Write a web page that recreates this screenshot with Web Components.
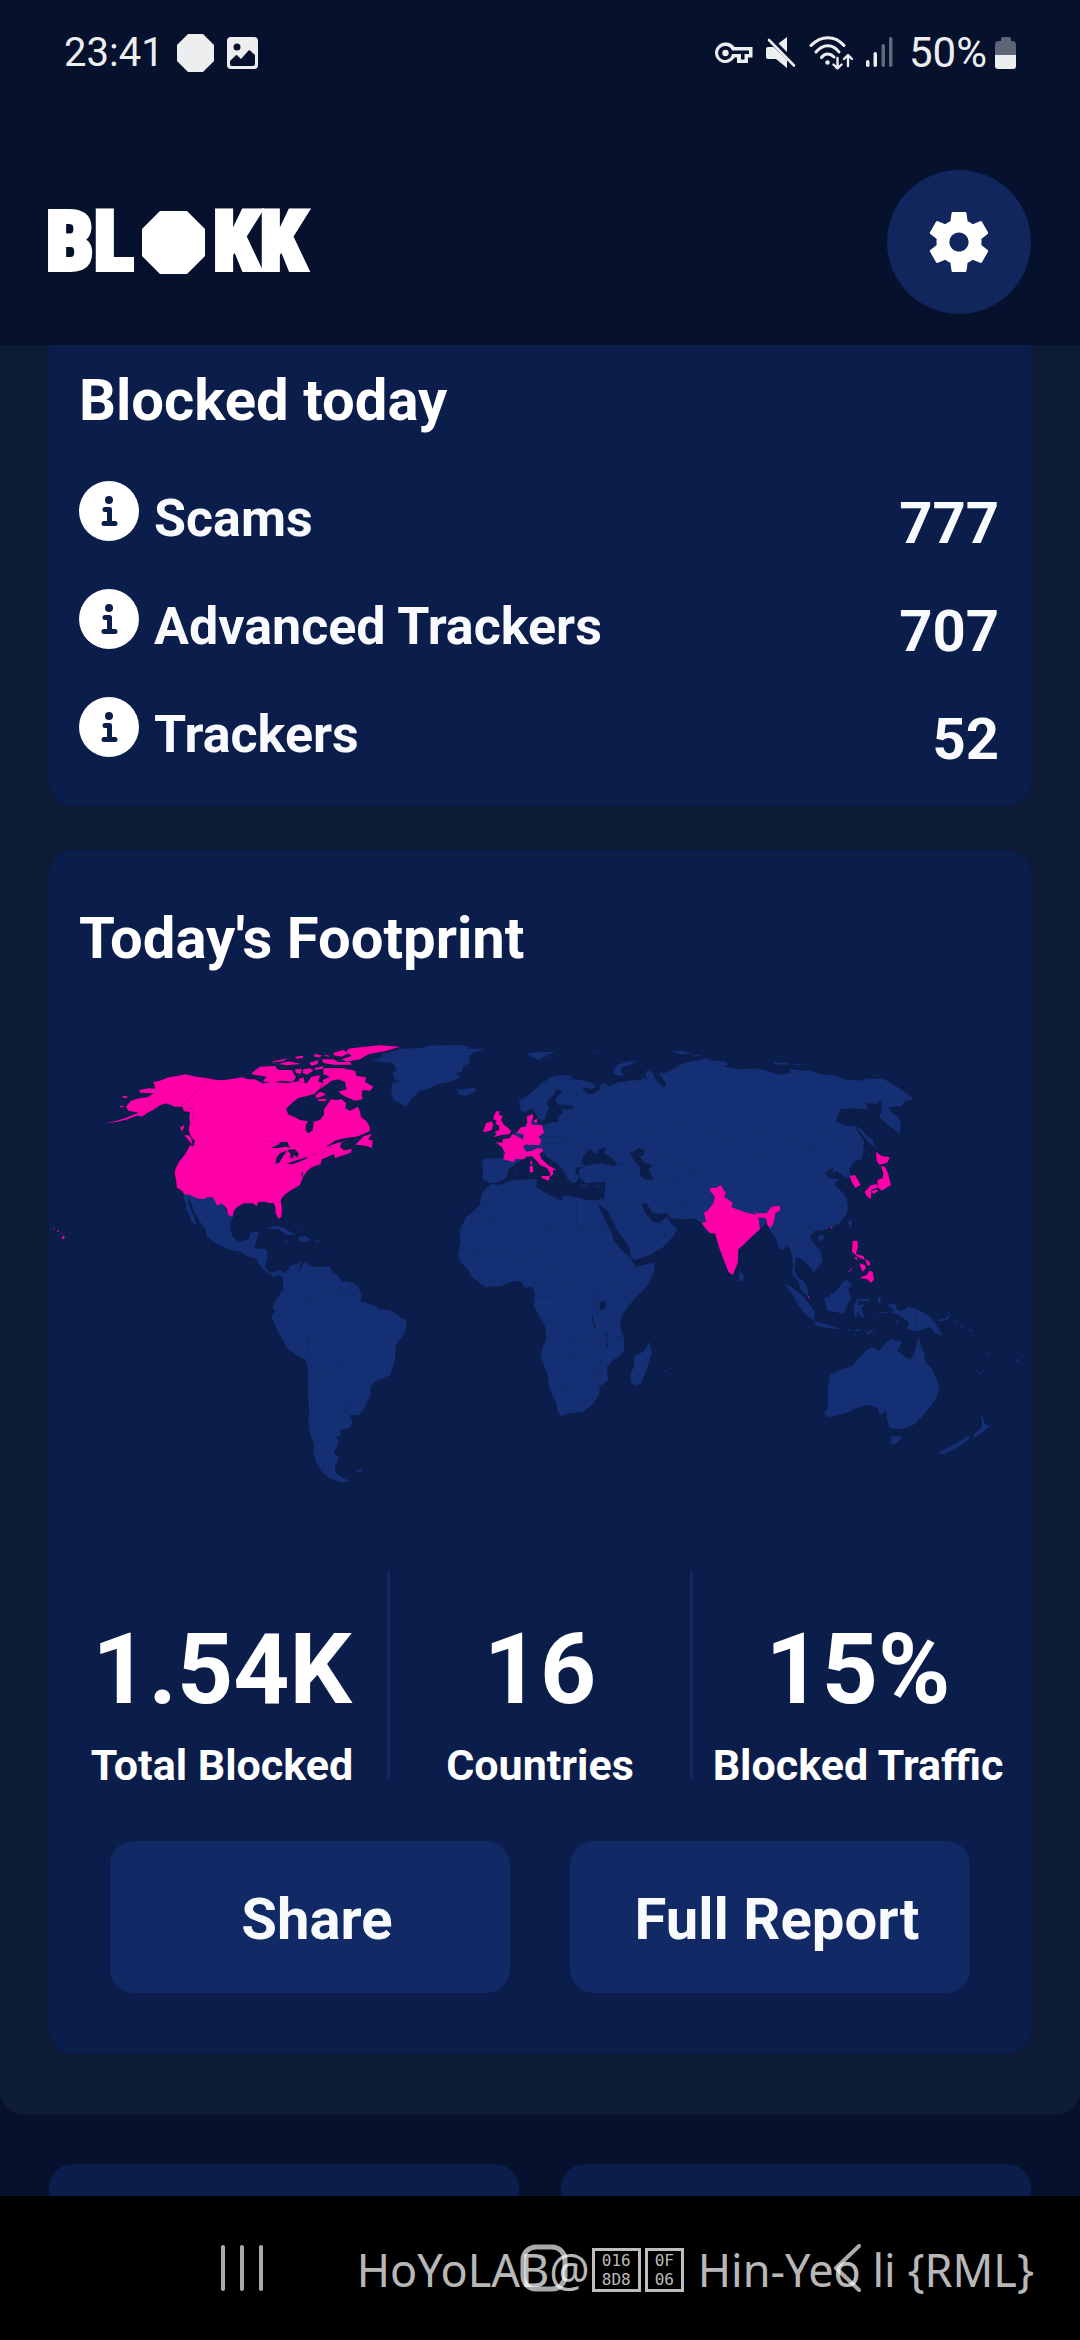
<!DOCTYPE html>
<html lang="en">
<head>
<meta charset="utf-8">
<meta name="viewport" content="width=device-width, initial-scale=1">
<title>BLOKK</title>
<style>
  html, body { margin: 0; background: #05112d; }
  body { font-family: Roboto, sans-serif; color: #fff; }
</style>
</head>
<body>
<blokk-app></blokk-app>

<template id="t-app">
  <style>
    :host { display: flex; flex-direction: column; height: 100vh; overflow: hidden; background: #05112d;
      --card: #0b1e4b; --raised: #112a66; --panel: #0d1b35; --land: #142f73; --hit: #ff00a8; }
    main { flex: 1; min-height: 0; overflow: hidden; }
    section { background: var(--panel); border-radius: 0 0 24px 24px; padding: 0 49px 61px; display: flex; flex-direction: column; gap: 44px; }
    .next { display: grid; grid-template-columns: 1fr 1fr; gap: 42px; padding: 49px 49px 0; }
    .next div { height: 200px; border-radius: 24px; background: var(--card); }
  </style>
  <status-bar></status-bar>
  <app-header></app-header>
  <main>
    <section>
      <blocked-card>
        <blocked-row count="777">Scams</blocked-row>
        <blocked-row count="707">Advanced Trackers</blocked-row>
        <blocked-row count="52">Trackers</blocked-row>
      </blocked-card>
      <footprint-card></footprint-card>
    </section>
    <div class="next"><div></div><div></div></div>
  </main>
  <nav-bar></nav-bar>
</template>

<template id="t-status">
  <style>
    :host { display: flex; align-items: center; height: 105px; padding: 0 64px 0 64px; box-sizing: border-box;
      font-size: 40px; line-height: 48px; color: #eceef0; }
    svg { display: block; fill: currentColor; }
    .left, .right { display: flex; align-items: center; gap: 13px; }
    .left { flex: 1; }
    .pct { display: flex; align-items: center; gap: 8px; margin-left: 3px; font-size: 42px; }
  </style>
  <div class="left">
    <span>23:41</span>
    <svg width="37" height="38" viewBox="0 0 37 38"><path d="M11 0H26L37 11V27L26 38H11L0 27V11Z"/></svg>
    <svg width="31" height="32" viewBox="0 0 31 32"><path fill-rule="evenodd" d="M4 0H27Q31 0 31 4V28Q31 32 27 32H4Q0 32 0 28V4Q0 0 4 0ZM10 6.500A3.500 3.500 0 1 0 10 13.500A3.500 3.500 0 1 0 10 6.500ZM3 24V27Q3 29 5 29H26Q28 29 28 27V18L23 13.500Q22 13 21.500 13.500L14 22L10.500 18.500Q9.500 17.500 8.500 18.500Z"/></svg>
  </div>
  <div class="right">
    <svg width="38" height="24" viewBox="0 0 38 24"><path fill-rule="evenodd" d="M10.500 1.500A10.300 10.300 0 1 0 19.500 16.500H22V22H33V16.500H37.500V6H19.500A10.300 10.300 0 0 0 10.500 1.500ZM10.500 5A7 7 0 0 1 17 9.500H34V13H29.500V18.500H26V13H17A7 7 0 1 1 10.500 5Z"/><circle cx="10.500" cy="12" r="3.200"/></svg>
    <svg width="30" height="31" viewBox="0 0 30 31"><path d="M21 0V15L12.500 6.500ZM2 10H7.500L21 23V31L10 22H2Q0 22 0 20V12Q0 10 2 10Z"/><path d="M3 3L28 28.500" fill="none" stroke="currentColor" stroke-width="2.600" stroke-linecap="round"/></svg>
    <svg width="44" height="34" viewBox="0 0 44 34"><g fill="none" stroke="currentColor" stroke-width="3" stroke-linecap="round" stroke-linejoin="round"><path d="M2 9.500C12-1 26-1 35 9.500M7 16C14 7.500 24 7.500 30 16M12.500 21.500C16 17 21 17 25 21"/><path d="M28.500 22V32M24.500 28.500L28.500 32.500L32.500 28.500M39 30V19.500M35 23L39 19L43 23" stroke-width="2.400"/></g><circle cx="18.500" cy="26.500" r="2.200"/></svg>
    <svg width="27" height="31" viewBox="0 0 27 31"><rect y="23" width="3.500" height="7" rx="1.700"/><rect x="7.500" y="15" width="3.500" height="15" rx="1.700"/><g opacity=".4"><rect x="15.500" y="7" width="3.500" height="23" rx="1.700"/><rect x="23" y="0" width="3.500" height="30" rx="1.700"/></g></svg>
    <span class="pct"><span>50%</span>
    <svg width="21" height="32" viewBox="0 0 21 32"><path opacity=".38" d="M6 4V2Q6 0 8 0H14Q16 0 16 2V4H17Q21 4 21 8V18H0V8Q0 4 4 4Z"/><path d="M0 18H21V29Q21 32 18 32H3Q0 32 0 29Z"/></svg></span>
  </div>
</template>

<template id="t-header">
  <style>
    :host { display: flex; align-items: center; justify-content: space-between; height: 144px; padding: 65px 49px 31px 46px; }
    .logo { display: flex; align-items: center; gap: 8px; font: 900 84px/64px "Liberation Sans Narrow", "Roboto Condensed", Roboto, sans-serif; -webkit-text-stroke: 4px #fff; }
    .logo svg { display: block; fill: #fff; }
    button { width: 144px; height: 144px; border: 0; padding: 0; border-radius: 50%; background: #10265c; display: grid; place-items: center; }
  </style>
  <div class="logo"><span>BL</span><svg width="63" height="63" viewBox="0 0 63 63" aria-hidden="true"><path d="M18 0H45L63 18V45L45 63H18L0 45V18Z"/></svg><span>KK</span></div>
  <button aria-label="Settings"><svg width="72" height="72" viewBox="0 0 24 24" fill="#fff"><path d="M19.430 12.980c.04-.32.07-.64.07-.98s-.03-.66-.07-.98l2.110-1.650c.19-.15.24-.42.12-.64l-2-3.460c-.12-.22-.39-.3-.61-.22l-2.490 1c-.52-.4-1.080-.73-1.690-.98l-.38-2.650C14.460 2.180 14.250 2 14 2h-4c-.25 0-.46.18-.49.42l-.38 2.650c-.61.25-1.170.59-1.690.98l-2.490-1c-.23-.09-.49 0-.61.22l-2 3.460c-.13.22-.07.49.12.64l2.110 1.650c-.04.32-.07.65-.07.98s.03.66.07.98l-2.110 1.650c-.19.15-.24.42-.12.64l2 3.460c.12.22.39.3.61.22l2.490-1c.52.4 1.080.73 1.690.98l.38 2.650c.03.24.24.42.49.42h4c.25 0 .46-.18.49-.42l.38-2.650c.61-.25 1.170-.59 1.690-.98l2.490 1c.23.09.49 0 .61-.22l2-3.460c.12-.22.07-.49-.12-.64l-2.110-1.650zM12 15.200c-1.770 0-3.200-1.430-3.200-3.200s1.430-3.200 3.200-3.200 3.200 1.430 3.200 3.200-1.430 3.200-3.200 3.200z"/></svg></button>
</template>

<template id="t-blocked">
  <style>
    :host { display: block; background: var(--card); border-radius: 0 0 24px 24px; padding: 21px 32px 33px 30px; }
    h2 { margin: 0 0 47px; font-size: 58px; line-height: 68px; font-weight: 700; }
    .rows { display: flex; flex-direction: column; gap: 32px; }
  </style>
  <h2>Blocked today</h2>
  <div class="rows"><slot></slot></div>
</template>

<template id="t-row">
  <style>
    :host { display: flex; align-items: flex-start; height: 76px; color: #f8fafd; font-weight: 700; }
    button { width: 60px; height: 60px; margin: 0 15px 0 0; padding: 0; border: 0; border-radius: 50%; background: #fff; }
    svg { display: block; }
    .label { flex: 1; padding-top: 8px; font-size: 52px; line-height: 60px; }
    .count { padding-top: 8px; font-size: 58px; line-height: 68px; }
  </style>
  <button aria-label="Info"><svg width="60" height="60" viewBox="0 0 60 60"><circle cx="30" cy="19" r="4" fill="#0b1e4b"/><path d="M26 28.500H30.500V42.500M25 42.500H36" fill="none" stroke="#0b1e4b" stroke-width="5" stroke-linecap="round" stroke-linejoin="round"/></svg></button>
  <span class="label"><slot></slot></span><span class="count"></span>
</template>

<template id="t-footprint">
  <style>
    :host { display: block; background: var(--card); border-radius: 24px; padding: 54px 0 61px; }
    h2 { margin: 0 30px 48px; font-size: 58px; line-height: 68px; font-weight: 700; }
    .stats { display: grid; grid-template-columns: 11fr 3px 10fr 3px 11fr; margin: 70px 8px 51px; }
    i { height: 210px; background: #10275f; }
    .actions { display: grid; grid-template-columns: 1fr 1fr; gap: 60px; padding: 0 61px; }
    button { height: 152px; border: 0; padding: 4px 0 0 14px; border-radius: 24px; background: var(--raised); color: #f8fafd; font: 700 58px/68px Roboto, sans-serif; }
  </style>
  <h2>Today's Footprint</h2>
  <world-map></world-map>
  <div class="stats">
    <stat-item value="1.54K">Total Blocked</stat-item><i></i>
    <stat-item value="16">Countries</stat-item><i></i>
    <stat-item value="15%">Blocked Traffic</stat-item>
  </div>
  <div class="actions"><button>Share</button><button>Full Report</button></div>
</template>

<template id="t-stat">
  <style>
    :host { display: flex; flex-direction: column; align-items: center; padding-top: 42px; gap: 13px; white-space: nowrap; font-weight: 700; }
    .value { font-size: 98px; line-height: 115px; }
    .name { font-size: 43px; line-height: 50px; }
  </style>
  <span class="value"></span><span class="name"><slot></slot></span>
</template>

<template id="t-map">
  <style>
    :host { display: block; }
    svg { display: block; width: 100%; height: auto; fill: var(--land); }
    .hit { fill: var(--hit); }
    .sea { fill: var(--card); }
    .line { fill: none; stroke: #122b6a; stroke-width: 2; }
  </style>
  <svg viewBox="49 1020 982 480" role="img" aria-label="World map of contacted countries">
    <!-- North and Central America -->
    <g transform="translate(40 1020) scale(.33333)">
      <path d="M432 520L475 532L518 530L535 552L548 548L565 583L578 588L570 620L578 650L595 665L625 658L632 638L658 633L648 665L642 685L680 688L683 715L675 740L690 758L720 752L730 765L732 775L715 764L702 772L680 757L658 735L650 715L625 710L600 695L570 690L530 672L500 650L498 630L480 605L465 580L455 552L445 532L445 550L458 580L470 617L455 605L445 580L435 565L440 555L430 535ZM678 628L700 617L725 620L768 645L740 645L715 628ZM778 650L795 648L815 660L790 667L776 662ZM729 663L748 665L740 669ZM827 661L838 662L836 667L827 666Z"/>
      <path d="M738 598l4 8M748 585l4 2M755 600l6 10M768 612l6 6M780 624l6 2M872 682v6M876 695v8M875 712v3M868 740h5" class="line" style="stroke:#142f73"/>
      <g class="hit">
        <path d="M197 310L230 302L262 292L296 278L265 272L258 260L272 243L296 235L322 232L342 220L300 218L298 210L326 205L346 206L340 186L360 182L386 172L412 168L436 163L470 170L512 176L532 181L560 179L606 172L625 178L645 178L668 190L700 186L740 190L775 184L800 190L815 170L840 165L835 185L850 190L838 208L822 222L800 228L775 234L757 248L738 266L745 284L762 290L780 300L803 304L797 318L797 332L806 340L817 332L820 318L820 305L840 300L852 284L852 268L865 250L872 238L890 240L905 238L918 250L916 265L930 273L942 266L954 260L960 275L963 292L978 302L988 318L990 332L975 340L950 350L930 353L905 356L885 364L858 380L885 370L908 361L923 360L905 366L900 380L910 390L925 390L937 388L915 400L885 414L882 402L860 412L845 418L842 432L812 443L800 455L790 470L783 485L780 495L750 512L732 526L722 540L726 568L724 590L716 597L707 580L706 560L700 548L690 550L675 545L655 546L650 558L638 550L612 550L590 562L580 575L578 590L565 585L560 565L545 550L532 557L526 545L518 532L500 532L495 537L475 536L448 524L432 523L428 514L411 503L408 480L404 460L407 445L417 425L430 410L443 390L450 376L462 378L464 362L452 348L446 330L450 310L448 290L450 276L432 274L426 260L405 260L390 254L378 250L360 256L340 270L320 280L300 288L290 287L262 298L230 306Z"/>
        <path d="M634 160L660 140L705 138L715 150L755 150L768 172L758 185L720 182L700 188L668 184L680 170L640 164ZM850 145L905 144L945 152L950 168L978 172L975 186L1000 200L990 212L968 210L965 225L968 238L945 242L912 228L895 215L920 208L915 186L895 178L875 182L858 195L840 208L850 192L848 180L870 170L850 162ZM920 95L925 86L960 82L1020 76L1080 80L1040 92L985 103L960 118L920 125L905 118L935 108ZM880 98L910 90L925 100L905 110L882 106ZM696 125L742 115L730 124L698 127ZM716 132L745 124L785 132L740 136ZM765 110L790 107L788 114L770 116ZM808 128L835 120L832 132L815 138ZM845 118L880 118L895 126L930 126L935 134L880 134L850 128ZM822 102L845 106L840 112L824 110ZM850 107L865 105L868 110ZM765 148L785 146L782 162L768 158ZM790 148L812 145L820 152L800 164L788 158ZM822 145L850 138L848 146L828 150ZM776 178L790 172L794 186L780 188ZM825 228L840 215L858 222L850 228L830 234ZM832 238L858 236L860 242L838 244ZM946 374L972 348L996 342L984 358L998 362L996 384L980 378L965 376ZM886 404L915 390L936 388L932 398L885 414ZM246 229L258 227L264 233L250 234ZM238 258L250 257L250 262L240 262ZM296 286L320 281L304 290ZM433 346L446 346L460 362L462 378L450 366ZM421 322L434 314L428 332L422 330ZM39 625h4v3h-4ZM51 631l5 2v3h-4ZM62 637l6 4-3 1ZM67 648L75 650L72 656L66 657Z"/>
      </g>
      <g class="sea"><path d="M692 384L718 372L720 366L742 366L750 384L735 380L715 384ZM706 432L710 412L722 398L742 392L728 410L718 428ZM742 390L765 388L777 402L770 412L762 405L758 416L750 412L752 402ZM740 432L765 422L802 411L800 416L760 432ZM858 380L885 362L925 353L960 349L925 360L895 368ZM785 458l5-2-3 16-3-4ZM452 356l12 8-6 16-4-6 4-6Z"/></g>
      <path d="M512 177L424 258L434 268L456 262L460 295L455 308M678 360L700 368L720 366M758 415L800 408L850 400L862 382L880 380" class="line" style="stroke:#a80882;stroke-width:1.500"/>
    </g>
    <!-- South America -->
    <g transform="translate(40 1240) scale(.33333)">
      <path d="M700 96L720 90L732 100L745 88L750 78L770 72L783 63L779 82L782 96L785 76L797 66L810 78L840 82L870 78L878 98L895 108L905 124L935 127L955 140L965 165L962 185L980 188L1010 200L1020 208L1055 213L1080 232L1096 238L1100 262L1092 280L1067 315L1065 360L1050 405L1035 412L1005 425L992 440L992 465L975 500L958 526L930 525L938 545L930 563L902 570L900 590L885 590L897 602L885 630L882 640L896 652L885 680L885 695L905 712L928 722L910 728L870 715L845 695L828 665L820 640L822 610L812 590L805 540L808 520L804 460L803 380L797 360L765 342L742 325L720 285L705 255L694 232L706 210L697 205L705 185L718 165L730 148L728 110L715 98ZM948 690L968 688L964 697L952 696Z"/>
      <path class="line" d="M770 80L775 108L812 125L818 165L835 172L842 150L875 138L868 125L875 98M875 138L888 168L905 165L900 130M905 165L942 165L950 142M930 130L928 158M718 172L745 185L740 205L712 225M745 185L795 222L793 170L820 170M795 222L765 235L762 265L790 280L806 292L830 282L840 305L880 325L905 370L880 376L868 402L905 425L915 450L935 455L948 440L938 410L908 400L905 370M806 292L806 360L825 405L868 402M825 405L815 480L828 540L826 620L848 660L855 690L880 698M948 445L920 482L920 525M920 482L958 508"/>
    </g>
    <!-- Greenland, Europe, Asia and Africa -->
    <g transform="translate(400 1020) scale(.33333)">
      <path d="M-82 122L-50 108L-60 102L-25 97L0 86L60 84L90 77L180 74L212 80L200 86L255 88L218 98L206 112L210 128L190 138L185 155L165 163L183 170L150 186L115 192L85 206L60 212L35 235L18 260L0 250L-20 238L-26 215L-24 190L0 182L-18 178L-22 160L-10 150L-20 130ZM163 206L190 208L222 203L230 212L200 228L170 222L178 214ZM380 100L420 96L468 96L440 105L415 119L395 110ZM440 112L460 110L450 115ZM568 94L598 93L585 97ZM638 160L650 135L680 125L716 121L690 135L665 142L662 155L675 167L650 166ZM815 92L850 93L875 102L840 103ZM875 105L905 106L888 111ZM1118 126L1168 130L1162 134L1125 133ZM1178 130L1205 133L1185 135ZM1426 162L1436 165L1430 167Z"/>
      <path d="M250 416L310 415L310 385L290 372L308 365L330 350L355 330L372 318L383 305L382 290L398 282L398 300L412 300L410 312L430 315L450 308L475 305L473 290L490 280L485 262L495 270L520 264L522 258L498 256L475 255L467 240L475 225L488 214L470 208L462 225L445 240L440 255L448 265L438 280L438 295L424 305L413 295L400 268L392 268L375 277L362 272L357 240L378 230L400 212L425 190L455 170L490 165L515 168L515 178L545 180L580 190L588 200L575 207L545 202L560 220L580 222L600 206L602 192L615 190L625 200L650 188L700 180L725 182L728 172L742 180L735 165L742 150L760 160L768 180L790 202L800 200L795 185L776 158L800 158L815 150L840 135L870 125L900 120L915 115L945 122L975 124L985 132L970 140L1020 148L1065 145L1095 150L1135 164L1175 158L1165 148L1230 153L1260 162L1310 168L1330 178L1400 182L1392 175L1450 178L1470 186L1512 215L1542 238L1512 245L1505 258L1465 262L1472 275L1495 292L1502 310L1500 342L1460 312L1438 290L1448 262L1440 238L1430 252L1400 248L1402 268L1360 265L1320 268L1308 306L1340 318L1364 318L1380 345L1392 365L1390 395L1384 418L1368 420L1358 432L1348 445L1352 465L1370 480L1380 495L1365 500L1350 474L1330 468L1310 452L1297 460L1300 442L1274 460L1290 475L1318 477L1302 492L1325 515L1340 535L1344 565L1335 590L1315 612L1280 628L1263 632L1245 632L1230 650L1245 675L1263 695L1268 722L1255 740L1240 758L1230 740L1205 718L1188 712L1184 750L1192 772L1212 783L1222 802L1227 832L1203 810L1195 785L1175 760L1180 735L1175 705L1165 675L1145 690L1135 685L1130 660L1110 630L1100 610L1078 628L1050 655L1030 675L1015 690L1000 765L960 690L945 640L920 635L905 608L885 596L860 598L810 595L800 578L775 582L755 575L740 550L725 550L735 580L750 595L757 605L780 608L800 590L812 610L832 625L820 650L790 680L750 705L705 720L692 710L690 685L670 655L650 630L640 605L620 570L606 562L612 535L617 485L595 487L560 490L540 475L535 450L552 440L530 442L525 455L538 470L528 488L510 485L500 470L488 448L470 430L440 410L428 392L420 405L385 410L370 418L348 430L325 450L318 475L290 488L272 490L248 478L250 450L245 440ZM540 494l20 2-2 4-16-2ZM586 500l16-6-8 8Z"/>
      <path d="M272 492L300 495L340 480L400 478L412 478L408 500L430 515L485 543L490 525L520 530L560 540L595 540L610 535L608 558L595 555L615 600L637 640L640 660L665 690L695 718L705 740L765 728L762 755L740 800L700 840L670 880L660 905L665 940L673 960L673 990L660 1008L640 1020L620 1042L625 1080L600 1098L597 1125L575 1155L550 1175L510 1180L485 1187L472 1175L470 1150L450 1110L443 1065L423 1010L428 980L440 955L435 920L420 890L400 858L405 815L395 800L375 803L360 783L335 785L305 797L255 802L215 770L205 750L180 725L173 700L182 670L178 630L200 590L240 555L245 520ZM748 965L756 998L738 1055L722 1092L705 1096L693 1085L692 1060L702 1040L702 1008L730 995ZM172 560l5 3-3 4ZM188 566h5v4h-5ZM205 561l6-3-3 8ZM106 676h4v4h-4ZM118 692h4v4h-4ZM795 1051h5v5h-5ZM813 1042h5v5h-5ZM340 452l10-3-3 7ZM1364 315L1385 330L1405 350L1422 360L1418 366L1432 388L1412 375ZM1344 608L1353 598L1356 612L1350 627ZM1254 652L1264 644L1272 648L1266 662L1256 664Z"/>
      <path class="sea" d="M545 430L550 405L570 386L582 398L598 402L594 390L618 381L612 400L640 418L652 432L640 440L610 430L580 432L555 438ZM690 402L715 385L735 390L730 405L720 412L735 430L757 436L745 450L752 458L760 480L735 478L718 465L722 445L705 425ZM598 848L612 842L619 852L612 868L600 870ZM576 880L580 900L590 930L584 925L576 898ZM617 940L621 942L620 965L628 983L620 980Z"/>
      <path class="line" d="M404 262L405 225L430 190L460 180L500 170L520 180L532 225L520 255M520 264L530 300L560 305L580 330L625 350L620 380M430 315L438 350L500 350L495 320L530 300M410 372L450 372L500 360L545 372L560 395M440 380L470 400L510 415L545 415M680 360L690 345L740 345L800 310L850 305L900 320L950 345L1000 360L1060 345L1070 335L1130 350L1180 360L1215 355L1225 320L1260 325L1300 350L1350 375L1355 400L1320 440M980 370L1030 390L1060 410L1160 432L1200 410L1245 380L1210 370M680 360L680 375L700 385M760 435L770 400L830 430L870 450L900 440L950 400L980 380M760 475L830 470L850 455L890 460L935 500M830 470L840 545L850 590M840 550L880 545L900 490M617 490L670 475L690 440L655 430M670 478L690 510L725 555M615 560L640 540L680 545L725 555M692 670L735 675L770 660L795 650L790 625L760 610M995 560L1060 585L1100 570L1150 560L1165 610L1200 640L1215 625L1240 620M1165 680L1160 650L1200 640L1230 680L1240 710L1210 715M302 495L310 520L250 550L248 570L215 580L215 610L180 635M248 570L360 655L430 620L455 640L450 680L355 720M404 480L405 545L430 620L530 645L530 530M535 628H635M530 645L520 720L540 750L580 760L610 720L640 700L665 690M270 590L275 690L180 715M182 690L215 680L240 740L255 790M275 690L330 700L355 720L350 785M310 790L305 745L280 735M440 700L445 740L400 800M445 740L520 755M405 830L470 830L480 800L520 795L590 810L580 880M435 900L470 915L510 920L515 1015L425 1015M515 950L570 960L575 915M580 880L600 870L660 905M590 810L620 790L685 805L735 765L695 725M600 955L670 950M515 1015L540 1020L580 998L605 1010L600 1050L575 1060L550 1050L540 1020M495 1115L490 1060M455 1130L490 1128L497 1105L530 1095L575 1062L590 1062L597 1100M548 1148L560 1135L565 1145L552 1155ZM680 865L682 808"/>
      <g class="hit"><path d="M283 283L290 273L299 274L296 284L308 288L303 300L312 315L322 322L333 332L328 343L300 346L280 352L290 342L284 335L298 330L296 315L286 312L290 302L280 298ZM249 334L258 310L275 304L280 315L275 330L258 336ZM288 367L308 368L308 358L330 355L336 343L350 346L368 358L382 368L370 382L378 392L382 405L372 418L345 417L342 426L310 418L315 398L305 380ZM350 340L362 322L378 320L382 305L380 290L398 282L400 292L394 304L394 314L412 315L426 316L432 338L415 350L424 360L420 375L385 375L370 368L370 342ZM402 300L412 297L410 308L403 307ZM378 395L395 392L412 385L428 386L428 396L418 400L425 418L445 436L470 450L458 450L460 462L450 470L450 458L440 443L420 435L408 420L395 408L380 410ZM424 468L450 468L446 482L425 474ZM388 440L398 436L400 455L390 458ZM390 424L396 422L396 434L391 432ZM930 504L950 503L962 495L970 508L978 520L972 530L998 548L995 562L1040 578L1068 584L1065 572L1070 580L1100 580L1115 560L1140 557L1140 572L1126 578L1122 605L1112 625L1102 615L1098 595L1075 592L1080 628L1050 655L1030 675L1015 688L1013 730L998 765L985 755L960 690L945 640L930 640L905 610L918 605L912 578L925 570L940 550L945 530L932 515ZM1350 468L1365 465L1382 495L1366 504L1355 485ZM1428 396L1445 408L1470 412L1462 428L1438 434L1430 422ZM1443 438L1455 440L1464 460L1473 495L1462 502L1445 512L1434 502L1432 480L1448 475L1450 460ZM1394 516L1412 496L1430 492L1434 504L1415 508L1412 538L1400 528ZM1415 514L1430 508L1434 514L1420 522ZM1293 621h4v4h-4ZM1358 662L1372 662L1374 680L1368 702L1390 708L1395 720L1375 712L1356 695ZM1362 712L1371 712L1370 722ZM1395 718L1408 724L1411 736L1402 736ZM1342 758L1355 745L1360 735L1355 748L1342 760ZM1378 730L1395 735L1398 745L1388 755L1382 742ZM1382 772L1400 765L1408 752L1418 755L1422 780L1412 788L1402 778L1384 775Z"/></g>
      <path d="M370 382L378 376L400 376L398 388L378 392ZM344 344L358 342L370 348L368 358Z"/>
    </g>
    <!-- South-East Asia and Oceania -->
    <g transform="translate(700 1200) scale(.33333)">
      <path d="M118 210L132 230L128 243L117 242ZM252 250L270 257L310 290L330 315L345 335L342 362L315 342L295 315L275 280ZM342 364L370 370L425 387L380 385L345 374ZM372 292L385 290L410 270L437 238L458 252L445 265L453 295L440 320L432 342L405 335L382 332ZM465 355L460 325L470 297L498 298L514 290L504 303L474 303L474 316L498 313L484 325L494 354L482 350L474 332L468 358ZM534 285L543 296L540 310L534 306ZM560 315L585 310L592 330L604 332L625 320L660 332L690 350L710 375L728 408L705 400L688 380L650 395L618 385L628 376L622 362L595 345L575 338L582 328ZM436 390L455 388L452 393ZM462 390L488 387L480 393L466 393ZM455 399L468 403L464 406ZM495 405L508 392L527 388L510 400ZM518 338L530 338L526 341ZM536 336L560 335L558 340L540 339ZM588 364L594 358L591 371ZM712 360L735 356L745 345L748 353L738 362L718 364ZM735 330L752 344L748 346ZM766 355L777 370L770 368ZM782 374L793 388L784 384ZM805 384L820 394L812 396ZM806 398L828 410L820 408ZM858 450L864 460L862 468ZM825 504L846 522L842 525ZM849 508h3v5h-3ZM944 481L956 477L954 484L946 484ZM958 470L972 464L964 471ZM372 640L385 620L383 570L390 525L420 508L455 500L480 470L500 450L518 441L538 452L555 430L575 418L606 425L592 452L615 470L630 478L643 460L650 430L657 410L663 440L672 455L677 488L695 505L717 555L713 585L695 615L665 650L640 675L605 688L570 684L560 655L560 632L540 646L532 625L510 614L470 623L440 638L385 652ZM575 708L607 710L592 728L573 735ZM843 645L850 652L854 672L870 678L852 694L820 714L824 700L846 682ZM806 707L810 715L775 740L730 763L714 758L750 740Z"/>
      <path class="line" d="M648 330V392M378 295L415 290L432 262L450 262"/>
      <circle class="hit" cx="326" cy="291" r="2.500"/>
    </g>
  </svg>
</template>

<template id="t-nav">
  <style>
    :host { display: block; position: relative; height: 144px; background: #000; }
    .keys { display: flex; height: 100%; align-items: center; justify-content: space-between; padding: 0 218px; }
    button { padding: 0; border: 0; background: none; }
    svg { display: block; fill: none; stroke: #aaa; stroke-width: 4; stroke-linecap: round; stroke-linejoin: round; }
    .mark { position: absolute; right: 46px; top: 42px; display: flex; align-items: center; font: 45px/64px "Noto Sans", sans-serif; white-space: pre; color: rgba(255,255,255,.74); }
    .box { display: inline-flex; flex-direction: column; justify-content: space-between; align-items: center; height: 38px; margin: 0 2px; padding: 0 7px; border: 3px solid; font: 16px/19px "DejaVu Sans Mono", monospace; }
  </style>
  <div class="keys">
    <button aria-label="Recents"><svg width="48" height="48" viewBox="0 0 48 48"><path d="M5 3V45M24 3V45M43 3V45"/></svg></button>
    <button aria-label="Home"><svg width="48" height="48" viewBox="0 0 48 48"><rect x="3" y="3" width="42" height="42" rx="13" stroke-width="5"/></svg></button>
    <button aria-label="Back"><svg width="40" height="48" viewBox="0 0 40 48"><path d="M37 2L14 24L37 46"/></svg></button>
  </div>
  <div class="mark"><span>HoYoLAB@</span><span class="box"><span>016</span><span>8D8</span></span><span class="box"><span>0F</span><span>06</span></span><span> Hin-Yeo li {RML}</span></div>
</template>

<script>
  function define(tag, templateId, setup) {
    customElements.define(tag, class extends HTMLElement {
      connectedCallback() {
        if (this.shadowRoot) return;
        const root = this.attachShadow({ mode: "open" });
        root.append(document.getElementById(templateId).content.cloneNode(true));
        if (setup) setup(this, root);
      }
    });
  }
  define("status-bar", "t-status");
  define("app-header", "t-header");
  define("blocked-card", "t-blocked");
  define("blocked-row", "t-row", (el, root) => { root.querySelector(".count").textContent = el.getAttribute("count"); });
  define("world-map", "t-map");
  define("stat-item", "t-stat", (el, root) => { root.querySelector(".value").textContent = el.getAttribute("value"); });
  define("footprint-card", "t-footprint");
  define("nav-bar", "t-nav");
  define("blokk-app", "t-app");
</script>
</body>
</html>
